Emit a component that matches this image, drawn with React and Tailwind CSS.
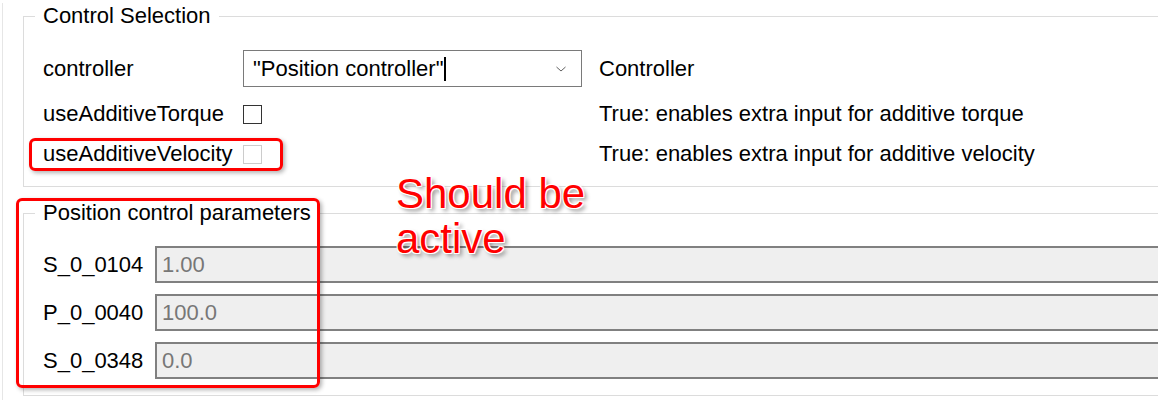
import { useState } from 'react'

const params = [
  { name: 'S_0_0104', value: '1.00' },
  { name: 'P_0_0040', value: '100.0' },
  { name: 'S_0_0348', value: '0.0' },
]

function Chevron() {
  return (
    <svg width="12" height="8" viewBox="0 0 12 8" className="text-[#606060]">
      <path d="M1.5 2 L6 6 L10.5 2" fill="none" stroke="currentColor" strokeWidth="1" />
    </svg>
  )
}

function Checkbox({ disabled }) {
  return (
    <div className={`w-[19px] h-[19px] bg-white border ${disabled ? 'border-[#cccccc]' : 'border-[#333333]'}`} />
  )
}

export default function App() {
  const [controller] = useState('"Position controller"')

  return (
    <div className="relative w-[1158px] h-[400px] overflow-hidden bg-white text-[22px] leading-[26px] text-black font-['Liberation_Sans',Arial,sans-serif]">
      <div className="ml-[2px] h-full border-l border-[#e6e6e6] pl-[20px]">
        {/* Control Selection */}
        <fieldset className="mt-[3px] mr-[-60px] border border-[#dcdcdc] pl-[11px] pb-[12px]">
          <legend className="px-[8px]">Control Selection</legend>
          <div className="pl-[8px] pt-[21px]">
            <div className="flex items-center h-[37px]">
              <div className="w-[200px]">controller</div>
              <div className="w-[356px]">
                <div className="w-[339px] h-[37px] border border-[#7a7a7a] bg-white flex items-center pl-[9px] pr-[14px]">
                  <span>{controller}</span>
                  <span className="inline-block w-[2px] h-[24px] bg-black ml-[1px]" />
                  <span className="flex-1" />
                  <Chevron />
                </div>
              </div>
              <div>Controller</div>
            </div>
            <div className="flex items-center h-[40px] mt-[7px]">
              <div className="w-[200px]">useAdditiveTorque</div>
              <div className="w-[356px]"><Checkbox /></div>
              <div>True: enables extra input for additive torque</div>
            </div>
            <div className="flex items-center h-[40px]">
              <div className="w-[200px]">useAdditiveVelocity</div>
              <div className="w-[356px]"><Checkbox disabled /></div>
              <div>True: enables extra input for additive velocity</div>
            </div>
          </div>
        </fieldset>

        {/* Position control parameters */}
        <fieldset className="mt-[13px] mr-[-60px] border border-[#dcdcdc] pl-[11px] pb-[16px]">
          <legend className="px-[8px]">Position control parameters</legend>
          <div className="pl-[8px] pt-[20px] flex flex-col gap-[11px]">
            {params.map((p) => (
              <div key={p.name} className="flex items-center h-[37px]">
                <div className="w-[112px]">{p.name}</div>
                <div className="flex-1 h-[37px] border-2 border-[#808080] bg-[#efefef] flex items-center pl-[5px] text-[#777777]">
                  {p.value}
                </div>
              </div>
            ))}
          </div>
        </fieldset>
      </div>

      {/* annotations */}
      <div className="absolute left-[29px] top-[138px] w-[254px] h-[33px] border-[3px] border-[#ff0000] rounded-[6px] shadow-[2px_2px_4px_rgba(0,0,0,0.3)]" />
      <div className="absolute left-[16px] top-[198px] w-[304px] h-[190px] border-[3px] border-[#ff0000] rounded-[6px] shadow-[2px_2px_4px_rgba(0,0,0,0.3)]" />
      <div className="absolute left-[396px] top-[171px] text-[42px] leading-[45px] text-[#ff0000] font-['Liberation_Sans',Arial,sans-serif] [text-shadow:-1px_-1px_0_#fff,1px_-1px_0_#fff,-1px_1px_0_#fff,1px_1px_0_#fff,3px_3px_4px_rgba(0,0,0,0.45)]">
        Should be<br />active
      </div>
    </div>
  )
}
